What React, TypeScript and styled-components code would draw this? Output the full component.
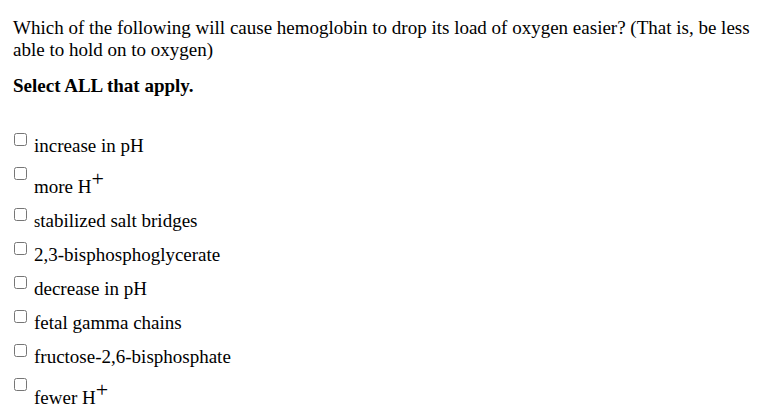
import React from "react";
import styled, { createGlobalStyle } from "styled-components";

const GlobalStyle = createGlobalStyle`
  body {
    margin: 0;
    background: #fff;
    color: #000;
    font-family: "Liberation Serif", "Times New Roman", serif;
    font-size: 19px;
    line-height: 22px;
  }
`;

const Form = styled.form`
  padding: 17px 13px 0;
`;

const Choices = styled.fieldset`
  margin: 0;
  padding: 0;
  border: 0;
  min-width: 0;
`;

const Legend = styled.legend`
  padding: 0;
`;

const Prompt = styled.span`
  display: block;
`;

const Instruction = styled.strong`
  display: block;
  margin-top: 14px;
`;

const List = styled.ul`
  margin: 35px 0 0;
  padding: 0;
  list-style: none;
`;

const Item = styled.li<{ $tall?: boolean }>`
  display: flex;
  align-items: flex-start;
  gap: 7px;
  min-height: ${(p) => (p.$tall ? 41 : 34)}px;
`;

const Checkbox = styled.input`
  flex: none;
  width: 13px;
  height: 13px;
  margin: 1px 0 0 1px;
`;

const Label = styled.label<{ $tall?: boolean }>`
  padding-top: ${(p) => (p.$tall ? 10 : 3)}px;
`;

const Sup = styled.sup`
  font-size: 22px;
  line-height: 0;
  vertical-align: 7px;
`;

const SmallLetter = styled.span`
  font-size: 16px;
`;

type Choice = { id: string; small?: string; text: string; charge?: string };

const choices: Choice[] = [
  { id: "increase-ph", text: "increase in pH" },
  { id: "more-h", text: "more H", charge: "+" },
  { id: "salt-bridges", small: "s", text: "tabilized salt bridges" },
  { id: "bpg", text: "2,3-bisphosphoglycerate" },
  { id: "decrease-ph", text: "decrease in pH" },
  { id: "gamma", text: "fetal gamma chains" },
  { id: "fructose", text: "fructose-2,6-bisphosphate" },
  { id: "fewer-h", text: "fewer H", charge: "+" },
];

export default function App() {
  return (
    <>
      <GlobalStyle />
      <Form>
        <Choices>
          <Legend>
            <Prompt>
              Which of the following will cause hemoglobin to drop its load of oxygen easier? (That
              is, be less able to hold on to oxygen)
            </Prompt>
            <Instruction>Select ALL that apply.</Instruction>
          </Legend>
          <List>
            {choices.map((c) => (
              <Item key={c.id} $tall={!!c.charge}>
                <Checkbox type="checkbox" id={c.id} name="answer" value={c.id} />
                <Label htmlFor={c.id} $tall={!!c.charge}>
                  {c.small && <SmallLetter>{c.small}</SmallLetter>}
                  {c.text}
                  {c.charge && <Sup>{c.charge}</Sup>}
                </Label>
              </Item>
            ))}
          </List>
        </Choices>
      </Form>
    </>
  );
}
